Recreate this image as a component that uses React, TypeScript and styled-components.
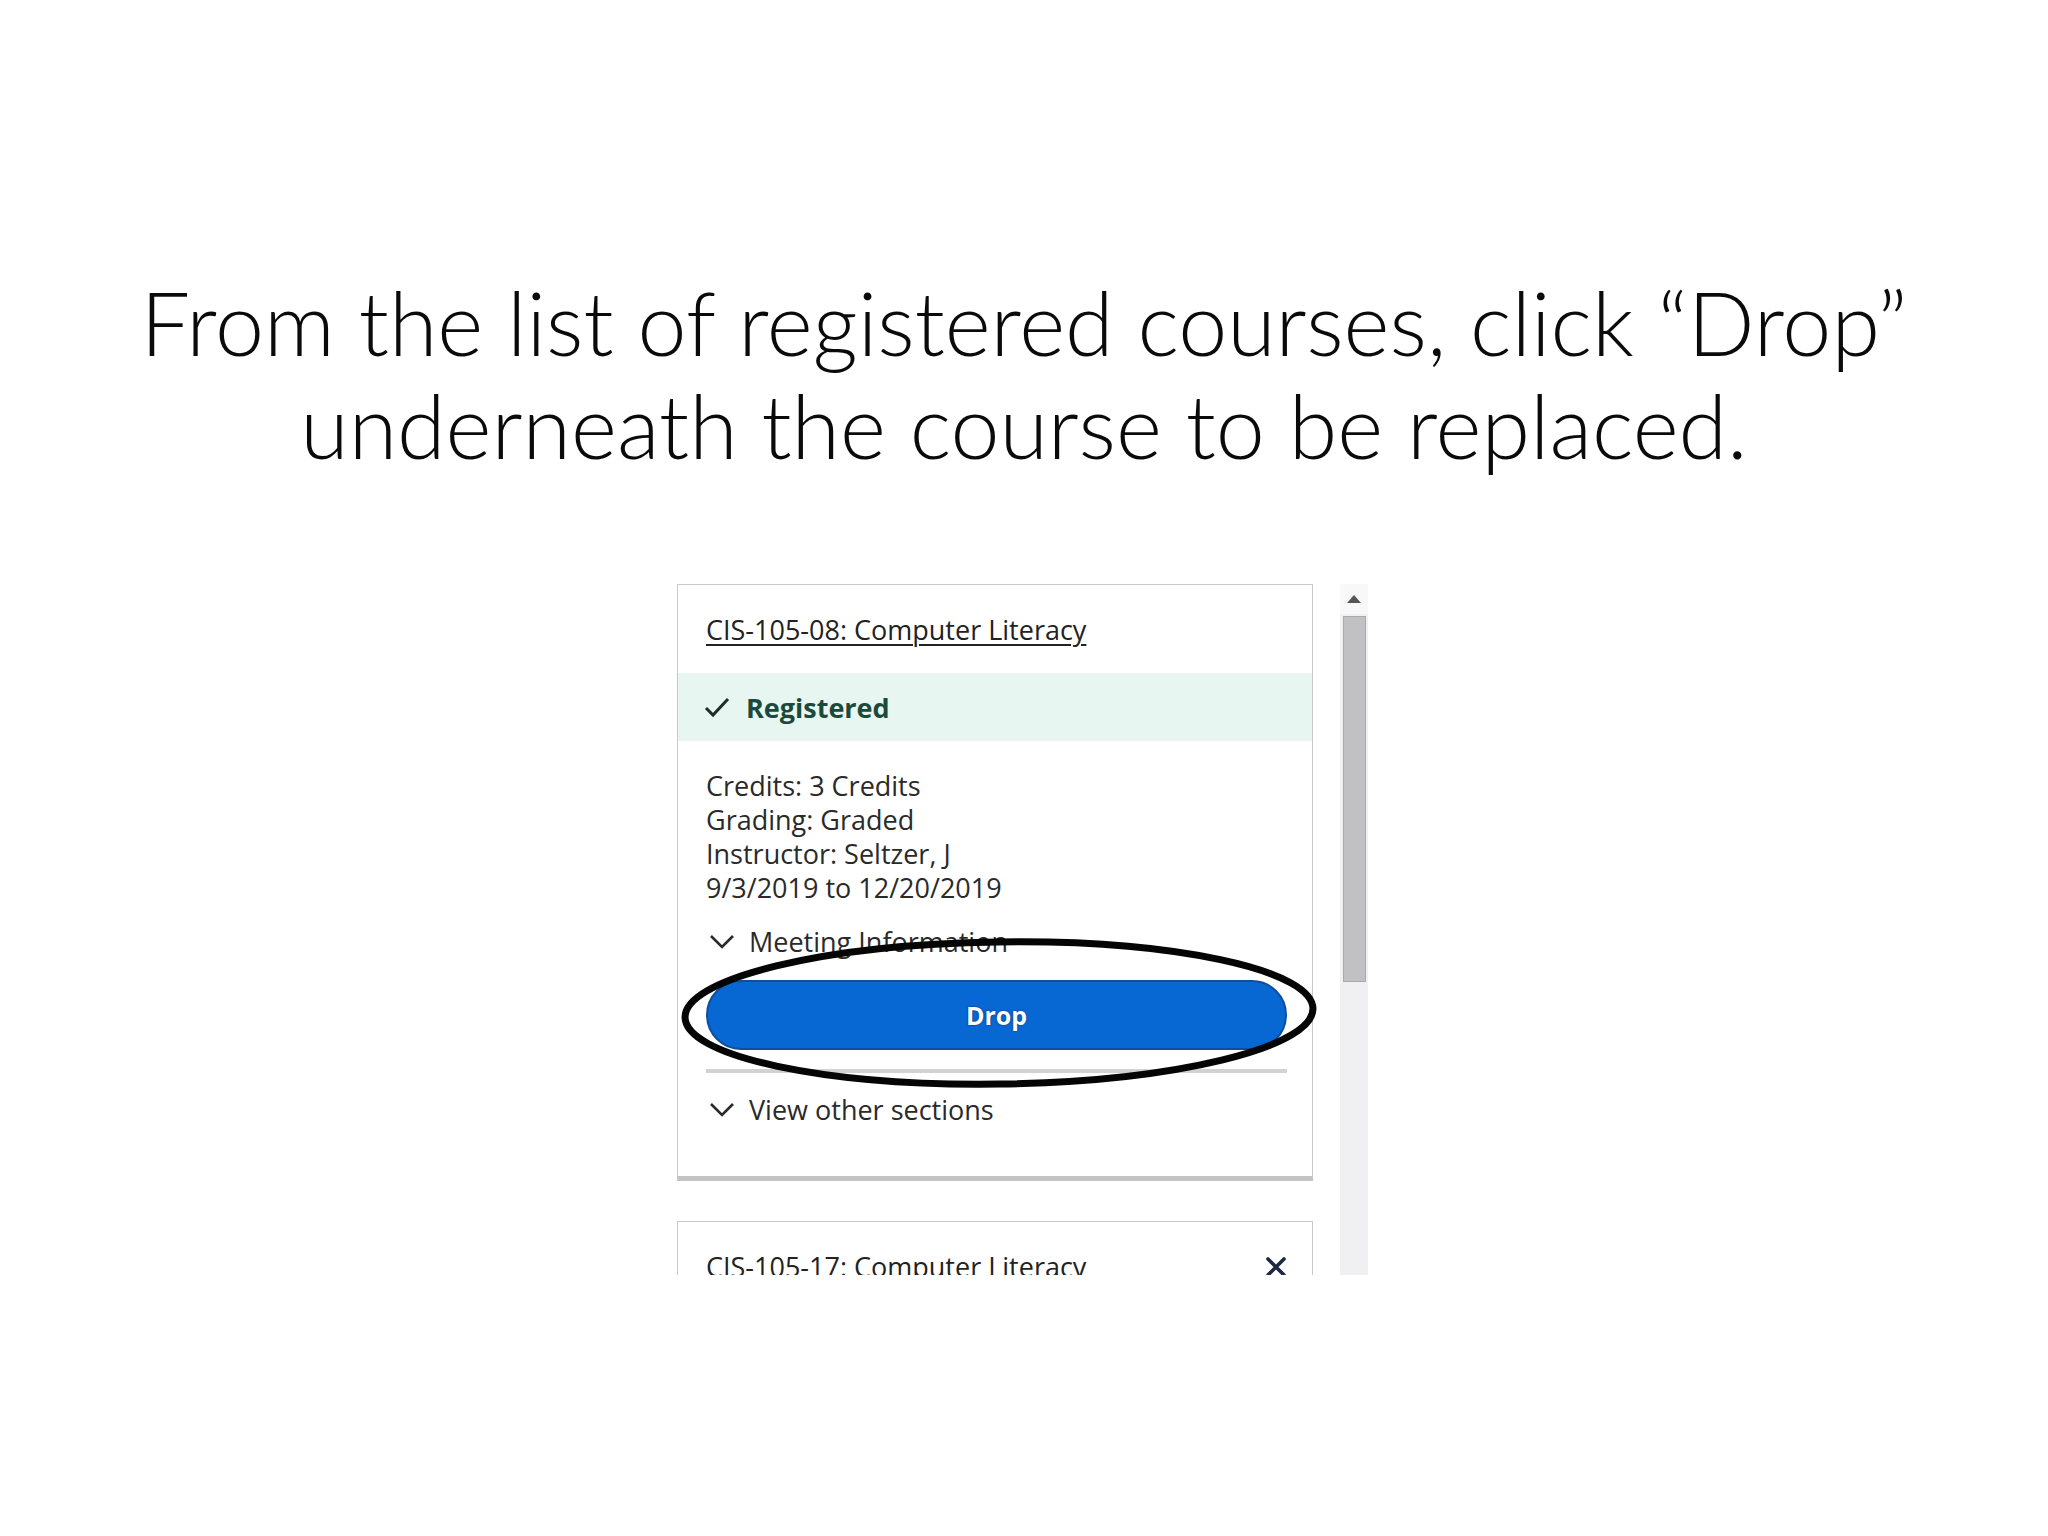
import React from "react";
import styled, { createGlobalStyle } from "styled-components";

const GlobalStyle = createGlobalStyle`
  html, body {
    margin: 0;
    padding: 0;
    background: #ffffff;
  }
`;

const Slide = styled.div`
  width: 2048px;
  height: 1536px;
  background: #ffffff;
  display: flex;
  flex-direction: column;
  align-items: flex-start;
  overflow: hidden;
`;

const Title = styled.h1`
  margin: 0;
  padding: 271px 0 0 0;
  width: 2048px;
  text-align: center;
  font-family: "Lato", "Open Sans", sans-serif;
  font-weight: 300;
  font-size: 88px;
  line-height: 103px;
  color: #0a0a0a;
`;

const Shot = styled.div`
  margin: 107px 0 0 677px;
  height: 691px;
  display: flex;
  flex-direction: row;
  gap: 27px;
  overflow: hidden;
  font-family: "Open Sans", "Noto Sans", sans-serif;
`;

const List = styled.div`
  width: 636px;
  display: flex;
  flex-direction: column;
  gap: 40px;
`;

const Card = styled.div`
  position: relative;
  border: 1px solid #c9c9c9;
  border-bottom: 5px solid #c4c4c4;
  background: #ffffff;
  flex-shrink: 0;
`;

const CardTitle = styled.div<{ $top?: number }>`
  padding: ${(p) => p.$top ?? 27}px 25px 0 28px;
  font-size: 27px;
  line-height: 36px;
  color: #222222;
  display: flex;
  justify-content: space-between;
  align-items: center;
`;

const CourseLink = styled.span`
  text-decoration: underline;
  text-underline-offset: 4px;
  text-decoration-thickness: 2px;
`;

const StatusBand = styled.div`
  margin-top: 25px;
  height: 68px;
  background: #e8f6f1;
  display: flex;
  align-items: center;
  gap: 16px;
  padding-left: 26px;
  font-size: 27px;
  font-weight: 700;
  color: #1b4a3c;
`;

const Body = styled.div`
  padding: 28px 25px 49px 28px;
  display: flex;
  flex-direction: column;
`;

const Line = styled.div`
  font-size: 27px;
  line-height: 34px;
  color: #2a2a2a;
`;

const Toggle = styled.div<{ $top: number }>`
  margin-top: ${(p) => p.$top}px;
  display: flex;
  align-items: center;
  gap: 14px;
  padding-left: 3px;
  font-size: 27px;
  line-height: 34px;
  color: #2a2a2a;
`;

const DropButton = styled.button`
  margin-top: 21px;
  height: 70px;
  width: 100%;
  border-radius: 35px;
  border: 2px solid #0c4f9e;
  background: #0768d4;
  color: #ffffff;
  font-family: "Open Sans", sans-serif;
  font-size: 25px;
  font-weight: 700;
  text-shadow: 0 0 2px #0a2a55;
`;

const Divider = styled.div`
  margin-top: 19px;
  height: 4px;
  background: #d2d2d2;
`;

const Ring = styled.svg`
  position: absolute;
  left: 0;
  top: 350px;
  pointer-events: none;
`;

const Scrollbar = styled.div`
  width: 28px;
  height: 691px;
  background: #f0f0f3;
  display: flex;
  flex-direction: column;
  align-items: center;
`;

const ScrollUp = styled.div`
  width: 28px;
  height: 30px;
  background: #f8f8f8;
  display: flex;
  justify-content: center;
  align-items: center;
`;

const Thumb = styled.div`
  margin-top: 2px;
  width: 23px;
  height: 366px;
  background: #c1c0c3;
  border: 1px solid #a9a9ab;
  box-sizing: border-box;
`;

const Chevron = () => (
  <svg width="26" height="16" viewBox="0 0 26 16">
    <polyline points="2,2 13,13 24,2" fill="none" stroke="#2a2a2a" strokeWidth="2.6" />
  </svg>
);

const Check = () => (
  <svg width="26" height="22" viewBox="0 0 26 22">
    <polyline points="2,12 9,19 24,3" fill="none" stroke="#1f2e29" strokeWidth="3" />
  </svg>
);

const Close = () => (
  <svg width="22" height="22" viewBox="0 0 22 22">
    <path d="M3 3 L19 19 M19 3 L3 19" stroke="#1c2940" strokeWidth="3.6" strokeLinecap="round" />
  </svg>
);

export default function App() {
  return (
    <Slide>
      <GlobalStyle />
      <Title>
        From the list of registered courses, click “Drop”
        <br />
        underneath the course to be replaced.
      </Title>
      <Shot>
        <List>
          <Card>
            <CardTitle>
              <CourseLink>CIS-105-08: Computer Literacy</CourseLink>
            </CardTitle>
            <StatusBand>
              <Check />
              Registered
            </StatusBand>
            <Body>
              <Line>Credits: 3 Credits</Line>
              <Line>Grading: Graded</Line>
              <Line>Instructor: Seltzer, J</Line>
              <Line>9/3/2019 to 12/20/2019</Line>
              <Toggle $top={20}>
                <Chevron />
                Meeting Information
              </Toggle>
              <DropButton>Drop</DropButton>
              <Divider />
              <Toggle $top={20}>
                <Chevron />
                View other sections
              </Toggle>
            </Body>
            <Ring width="645" height="160" viewBox="0 0 645 160">
              <ellipse
                cx="321"
                cy="78"
                rx="314"
                ry="71"
                fill="none"
                stroke="#050505"
                strokeWidth="7"
                transform="rotate(-0.8 321 78)"
              />
            </Ring>
          </Card>
          <Card>
            <CardTitle $top={27}>
              <span>CIS-105-17: Computer Literacy</span>
              <Close />
            </CardTitle>
            <Body />
          </Card>
        </List>
        <Scrollbar>
          <ScrollUp>
            <svg width="14" height="8" viewBox="0 0 14 8">
              <polygon points="7,0 14,8 0,8" fill="#555" />
            </svg>
          </ScrollUp>
          <Thumb />
        </Scrollbar>
      </Shot>
    </Slide>
  );
}
